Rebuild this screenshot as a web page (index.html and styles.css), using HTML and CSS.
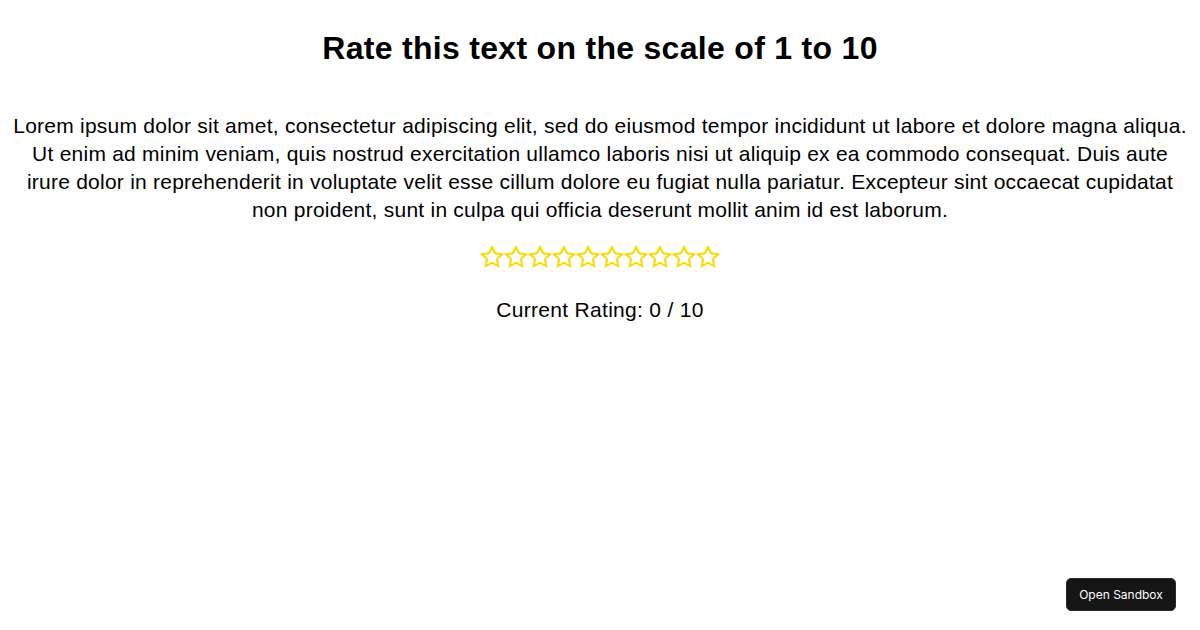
FILE: index.html
```html
<!DOCTYPE html>
<html>
<head>
<meta charset="utf-8">
<link rel="stylesheet" href="styles.css">
</head>
<body>
<div class="app">
  <h1 class="title">Rate this text on the scale of 1 to 10</h1>
  <p class="text">Lorem ipsum dolor sit amet, consectetur adipiscing elit, sed do eiusmod tempor incididunt ut labore et dolore magna aliqua. Ut enim ad minim veniam, quis nostrud exercitation ullamco laboris nisi ut aliquip ex ea commodo consequat. Duis aute irure dolor in reprehenderit in voluptate velit esse cillum dolore eu fugiat nulla pariatur. Excepteur sint occaecat cupidatat non proident, sunt in culpa qui officia deserunt mollit anim id est laborum.</p>
  <div class="stars">
    <svg class="star" viewBox="0 0 24 24"><path d="M12 2l3.09 6.26L22 9.27l-5 4.87 1.18 6.88L12 17.77l-6.18 3.25L7 14.14 2 9.27l6.91-1.01L12 2z"/></svg>
    <svg class="star" viewBox="0 0 24 24"><path d="M12 2l3.09 6.26L22 9.27l-5 4.87 1.18 6.88L12 17.77l-6.18 3.25L7 14.14 2 9.27l6.91-1.01L12 2z"/></svg>
    <svg class="star" viewBox="0 0 24 24"><path d="M12 2l3.09 6.26L22 9.27l-5 4.87 1.18 6.88L12 17.77l-6.18 3.25L7 14.14 2 9.27l6.91-1.01L12 2z"/></svg>
    <svg class="star" viewBox="0 0 24 24"><path d="M12 2l3.09 6.26L22 9.27l-5 4.87 1.18 6.88L12 17.77l-6.18 3.25L7 14.14 2 9.27l6.91-1.01L12 2z"/></svg>
    <svg class="star" viewBox="0 0 24 24"><path d="M12 2l3.09 6.26L22 9.27l-5 4.87 1.18 6.88L12 17.77l-6.18 3.25L7 14.14 2 9.27l6.91-1.01L12 2z"/></svg>
    <svg class="star" viewBox="0 0 24 24"><path d="M12 2l3.09 6.26L22 9.27l-5 4.87 1.18 6.88L12 17.77l-6.18 3.25L7 14.14 2 9.27l6.91-1.01L12 2z"/></svg>
    <svg class="star" viewBox="0 0 24 24"><path d="M12 2l3.09 6.26L22 9.27l-5 4.87 1.18 6.88L12 17.77l-6.18 3.25L7 14.14 2 9.27l6.91-1.01L12 2z"/></svg>
    <svg class="star" viewBox="0 0 24 24"><path d="M12 2l3.09 6.26L22 9.27l-5 4.87 1.18 6.88L12 17.77l-6.18 3.25L7 14.14 2 9.27l6.91-1.01L12 2z"/></svg>
    <svg class="star" viewBox="0 0 24 24"><path d="M12 2l3.09 6.26L22 9.27l-5 4.87 1.18 6.88L12 17.77l-6.18 3.25L7 14.14 2 9.27l6.91-1.01L12 2z"/></svg>
    <svg class="star" viewBox="0 0 24 24"><path d="M12 2l3.09 6.26L22 9.27l-5 4.87 1.18 6.88L12 17.77l-6.18 3.25L7 14.14 2 9.27l6.91-1.01L12 2z"/></svg>
  </div>
  <p class="rating">Current Rating: 0 / 10</p>
</div>
<button class="sandbox">Open Sandbox</button>
</body>
</html>
```

FILE: styles.css
```css
html, body {
  margin: 0;
  padding: 0;
  background: #fff;
}
body {
  font-family: "Liberation Sans", Arial, sans-serif;
  color: #000;
  width: 1200px;
  height: 630px;
  overflow: hidden;
}
.app {
  display: flex;
  flex-direction: column;
  align-items: center;
  padding: 30px 8px 0;
  text-align: center;
}
.title {
  font-size: 32px;
  font-weight: bold;
  line-height: 37px;
  letter-spacing: 0.3px;
  margin: 0 0 45px;
}
.text {
  font-size: 21px;
  line-height: 28px;
  letter-spacing: 0.24px;
  margin: 0 0 21px;
}
.stars {
  display: flex;
  gap: 0;
}
.star {
  width: 24px;
  height: 24px;
  fill: none;
  stroke: #ffd700;
  stroke-width: 2;
  stroke-linejoin: miter;
}
.rating {
  font-size: 21px;
  line-height: 28px;
  letter-spacing: 0.3px;
  margin: 27px 0 0;
}
.sandbox {
  position: fixed;
  right: 24px;
  bottom: 19px;
  width: 110px;
  height: 33px;
  background: #151515;
  color: #fff;
  border: 1px solid #2a2a2a;
  border-radius: 5px;
  font-family: Inter, "Liberation Sans", sans-serif;
  font-size: 12px;
  padding: 0;
}
```
